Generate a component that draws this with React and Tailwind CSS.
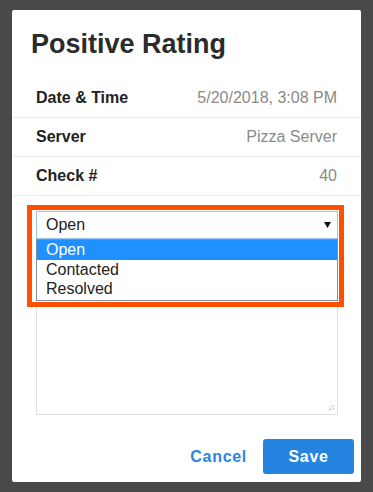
import React from "react";

const font = { fontFamily: '"Liberation Sans", Arial, sans-serif' };

function Row({ label, value }) {
  return (
    <div className="h-[39px] border-b border-[#ececec] flex items-center justify-between px-[24px]">
      <span className="text-[16px] leading-[18px] font-bold text-[#222]">{label}</span>
      <span className="text-[16px] leading-[18px] text-[#8a8a8a]">{value}</span>
    </div>
  );
}

export default function App() {
  return (
    <div className="w-[373px] h-[492px] bg-[#494949] pt-[10px] pl-[12px]" style={font}>
      <div className="w-[349px] h-[472px] bg-white rounded-[2px] relative flex flex-col">
        <h1 className="pt-[19px] pl-[19px] text-[27px] leading-[30px] font-bold text-[#2b2b2b]">
          Positive Rating
        </h1>
        <div className="mt-[20px]">
          <Row label="Date & Time" value="5/20/2018, 3:08 PM" />
          <Row label="Server" value="Pizza Server" />
          <Row label="Check #" value="40" />
        </div>
        <div className="px-[24px] pr-[23px] mt-[15px] relative">
          <div className="h-[28px] border border-[#9dc3ee] flex items-center justify-between pl-[9px] pr-[6px]">
            <span className="text-[16px] leading-[18px] text-[#222]">Open</span>
            <svg width="7" height="6" viewBox="0 0 7 6">
              <path d="M0 0 H7 L3.5 6 Z" fill="#111" />
            </svg>
          </div>
          <div className="mt-[10px] h-[166px] border border-[#e0e0e0] relative">
            <svg className="absolute right-[2px] bottom-[2px]" width="8" height="8" viewBox="0 0 8 8">
              <path d="M7 1 L1 7 M7 4 L4 7" stroke="#999" strokeWidth="1" strokeDasharray="1 1" />
            </svg>
          </div>
          <div className="absolute left-[24px] right-[23px] top-[28px] h-[62px] border border-[#8090a8] bg-white flex flex-col text-[16px] leading-[20px] text-[#222]">
            <div className="bg-[#1e90ff] text-white pl-[9px] h-[20px]">Open</div>
            <div className="pl-[9px] h-[19px]">Contacted</div>
            <div className="pl-[9px] h-[20px]">Resolved</div>
          </div>
          <div className="absolute left-[15px] right-[17px] top-[-6px] h-[102px] border-[5px] border-[#ff5000]" />
        </div>
        <div className="mt-auto mb-[8px] mr-[7px] flex items-center justify-end gap-[16px]">
          <span className="text-[16px] font-bold tracking-[0.7px] text-[#2a86e2]">Cancel</span>
          <div className="w-[91px] h-[35px] rounded-[3px] bg-[#2484e0] flex items-center justify-center text-white text-[16px] font-bold tracking-[0.7px]">
            Save
          </div>
        </div>
      </div>
    </div>
  );
}
